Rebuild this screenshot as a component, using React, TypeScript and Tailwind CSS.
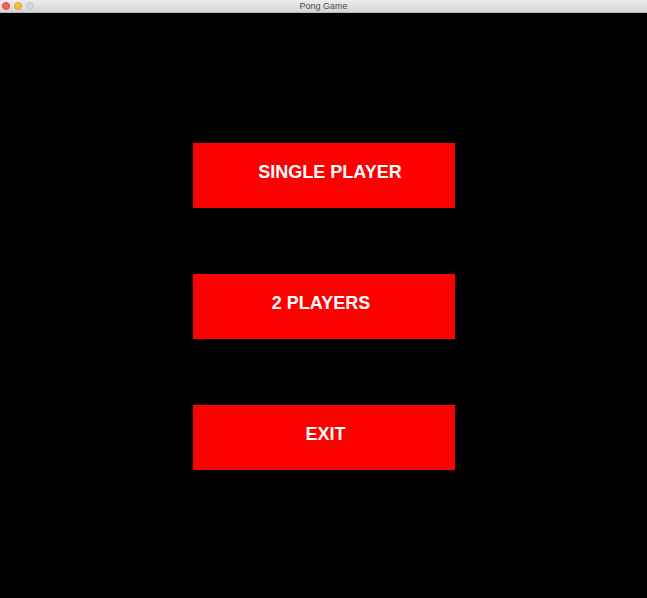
import React from "react";

const font = { fontFamily: '"Liberation Sans", Arial, sans-serif' };

function MenuButton({ label, offset }: { label: string; offset: string }) {
  return (
    <button
      className={`w-[262px] h-[65px] bg-[#ff0000] flex justify-center items-start pt-[20px] text-white font-bold text-[18px] leading-[18px] ${offset}`}
      style={font}
    >
      {label}
    </button>
  );
}

export default function App() {
  return (
    <div className="w-[647px] h-[598px] bg-black flex flex-col overflow-hidden" style={font}>
      <div className="relative h-[13px] shrink-0 bg-gradient-to-b from-[#ececec] to-[#d6d6d6] border-b border-[#b9b9b9] flex items-center justify-center">
        <div className="absolute left-[2px] top-[2px] flex gap-[4px]">
          <span className="w-[8px] h-[8px] rounded-full bg-[#fc605c] border border-[#e0443e]" />
          <span className="w-[8px] h-[8px] rounded-full bg-[#fdbc40] border border-[#dea123]" />
          <span className="w-[8px] h-[8px] rounded-full bg-[#d7d7d7] border border-[#c4c4c4]" />
        </div>
        <span className="text-[9px] leading-[9px] text-[#4d4d4d]">Pong Game</span>
      </div>
      <div className="flex flex-col items-start pl-[193px] pt-[130px] gap-[66px]">
        <MenuButton label="SINGLE PLAYER" offset="pl-[12px]" />
        <MenuButton label="2 PLAYERS" offset="pr-[6px]" />
        <MenuButton label="EXIT" offset="pl-[3px]" />
      </div>
    </div>
  );
}
